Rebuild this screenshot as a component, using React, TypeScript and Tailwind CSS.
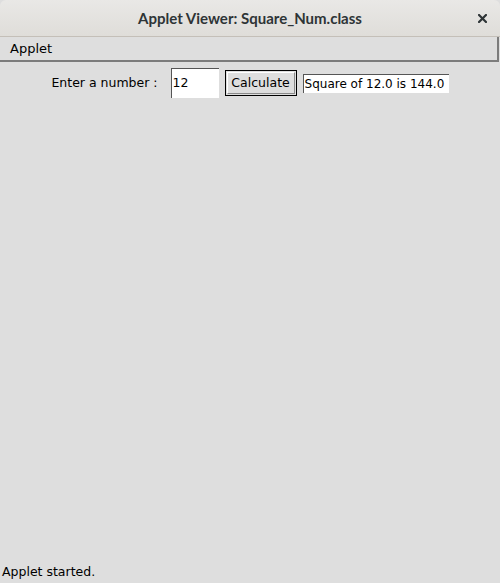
import React from 'react';

const dialog = { fontFamily: '"DejaVu Sans", sans-serif' };

export default function App() {
    return (
        <div className="w-[500px] h-[583px] flex flex-col bg-[#dedede] overflow-hidden" style={dialog}>
            {/* title bar */}
            <div className="h-[37px] shrink-0 rounded-t-[6px] bg-gradient-to-b from-[#e9e8e6] to-[#dfddd9] border-b border-[#c4bfb8] flex items-center relative">
                <div className="flex-1 text-center text-[15px] font-bold text-[#2e3436] pt-[1px]" style={{ fontFamily: 'Lato, sans-serif' }}>
                    Applet Viewer: Square_Num.class
                </div>
                <svg className="absolute right-[13px] top-[14px]" width="9" height="9" viewBox="0 0 9 9">
                    <path d="M1 1 L8 8 M8 1 L1 8" stroke="#2e3436" strokeWidth="2.2" strokeLinecap="square" />
                </svg>
            </div>

            {/* menu bar */}
            <div className="h-[25px] shrink-0 flex items-center pl-[10px] pt-[1px] border-b-2 border-r-2 border-[#7c7c7c] mr-[1px] bg-[#dedede]">
                <span className="text-[13px] text-black">Applet</span>
            </div>

            {/* applet area */}
            <div className="flex-1 flex flex-col">
                <div className="flex items-center justify-center pt-[6px]">
                    <span className="text-[12.5px] text-black mr-[13px]">Enter a number :</span>
                    <div className="w-[48px] h-[30px] bg-white border-l border-t border-[#555] flex items-center pl-[1px] text-[12.5px] text-black">
                        12
                    </div>
                    <div className="ml-[6px] h-[26px] w-[72px] border border-black p-[1px] flex">
                        <div className="flex-1 border border-t-white border-l-white border-r-[#8a8a8a] border-b-[#8a8a8a] flex items-center justify-center text-[12.5px] text-black bg-[#dedede]">
                            Calculate
                        </div>
                    </div>
                    <div className="ml-[6px] w-[146px] h-[19px] bg-white border-l border-t border-[#555] flex items-center pl-[1px] text-[12px] text-black whitespace-nowrap">
                        Square of 12.0 is 144.0
                    </div>
                </div>
                <div className="flex-1" />
                <div className="h-[22px] flex items-center pl-[2px] pt-[1px] text-[12.5px] text-black">Applet started.</div>
            </div>
        </div>
    );
}
